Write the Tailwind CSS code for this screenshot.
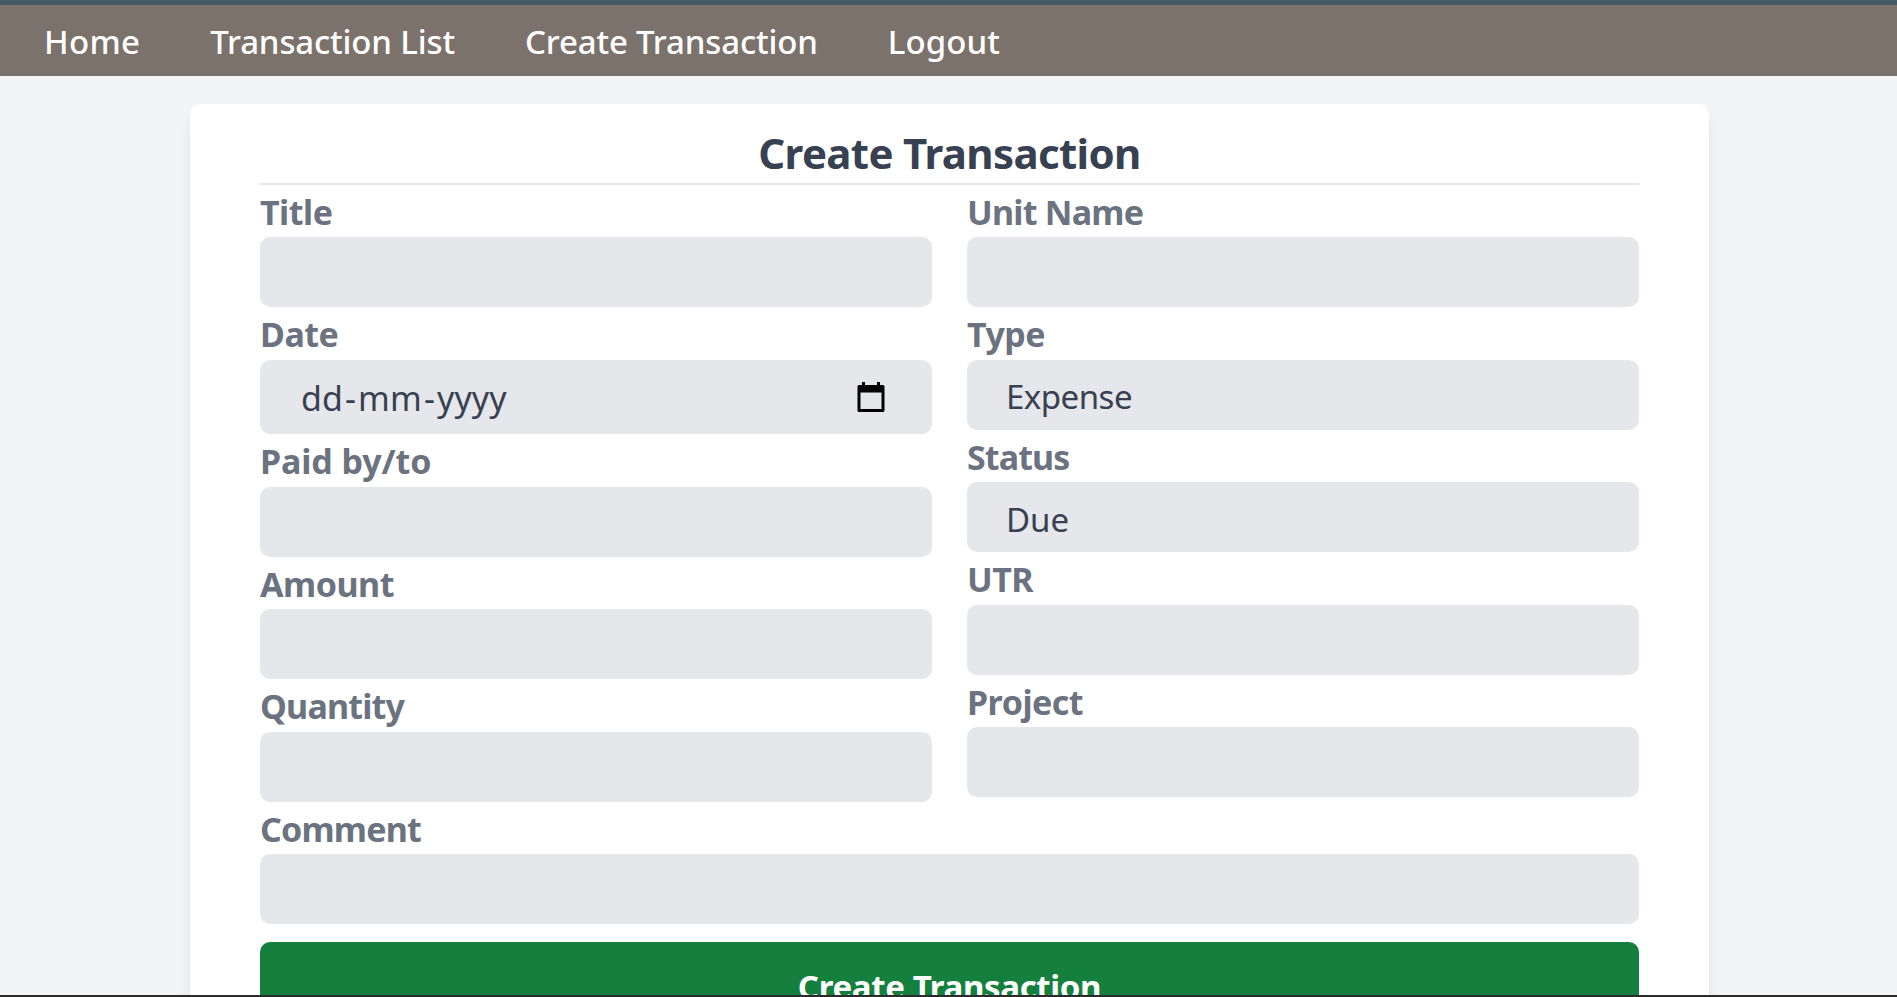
<!DOCTYPE html>
<html><head><meta charset="utf-8"><script src="https://cdn.jsdelivr.net/npm/@tailwindcss/browser@4"></script></head>
<body class="relative h-[997px] overflow-hidden bg-[#f3f4f6] font-['Noto_Sans',sans-serif]">
<div class="h-[5px] bg-[#455a64]"></div>
<nav class="flex h-[71px] items-center gap-[70px] bg-[#7c726c] pt-[2px] pl-[44px] text-[33px] font-medium tracking-[-0.15px] text-white">
<a class="tracking-[0.3px]">Home</a><a>Transaction List</a><a>Create Transaction</a><a class="tracking-[0.1px]">Logout</a>
</nav>
<main class="mt-[28px] ml-[190px] w-[1519px] rounded-[10px] bg-white px-[70px] pt-[24px] shadow-[0_12px_20px_-4px_rgba(0,0,0,0.1),0_5px_8px_-5px_rgba(0,0,0,0.1)]">
<h1 class="h-[57px] border-b-2 border-[#e5e7eb] text-center text-[42px] leading-[50px] font-bold tracking-[-0.65px] text-[#374151]">Create Transaction</h1>
<div class="grid grid-cols-2 gap-x-[35px]">
<div class="flex flex-col">
<label class="h-[52px] pt-[4px] text-[34px] leading-[46px] font-bold tracking-[-0.5px] text-[#6b7280]">Title</label><div class="h-[70px] rounded-[10px] bg-[#e5e7eb]"></div>
<label class="h-[53px] pt-[4px] text-[34px] leading-[46px] font-bold tracking-[-0.5px] text-[#6b7280]">Date</label>
<div class="flex h-[74px] items-center justify-between rounded-[10px] bg-[#e5e7eb] pr-[43px] pl-[41px] text-[34px] tracking-[0.1px] text-[#374151]"><span class="pt-[3px]">dd<span class="mx-[2px]">-</span>mm<span class="mx-[2px]">-</span>yyyy</span>
<svg class="h-[36px] w-[36px]" viewBox="0 0 24 24" fill="none"><path d="M3 5a1 1 0 0 1 1-1h2V2h2v2h8V2h2v2h2a1 1 0 0 1 1 1v16a1 1 0 0 1-1 1H4a1 1 0 0 1-1-1V5zm2 4v11h14V9H5z" fill="#000"/></svg></div>
<label class="h-[53px] pt-[4px] text-[34px] leading-[46px] font-bold tracking-[-0.1px] text-[#6b7280]">Paid by/to</label><div class="h-[70px] rounded-[10px] bg-[#e5e7eb]"></div>
<label class="h-[52px] pt-[4px] text-[34px] leading-[46px] font-bold tracking-[-0.5px] text-[#6b7280]">Amount</label><div class="h-[70px] rounded-[10px] bg-[#e5e7eb]"></div>
<label class="h-[53px] pt-[4px] text-[34px] leading-[46px] font-bold tracking-[-0.8px] text-[#6b7280]">Quantity</label><div class="h-[70px] rounded-[10px] bg-[#e5e7eb]"></div>
</div>
<div class="flex flex-col">
<label class="h-[52px] pt-[4px] text-[34px] leading-[46px] font-bold tracking-[-0.75px] text-[#6b7280]">Unit Name</label><div class="h-[70px] rounded-[10px] bg-[#e5e7eb]"></div>
<label class="h-[53px] pt-[4px] text-[34px] leading-[46px] font-bold tracking-[-0.5px] text-[#6b7280]">Type</label><div class="flex h-[70px] items-center rounded-[10px] bg-[#e5e7eb] pt-[3px] pl-[39px] text-[33px] tracking-[-0.5px] text-[#374151]">Expense</div>
<label class="h-[52px] pt-[4px] text-[34px] leading-[46px] font-bold tracking-[-0.9px] text-[#6b7280]">Status</label><div class="flex h-[70px] items-center rounded-[10px] bg-[#e5e7eb] pt-[5px] pl-[39px] text-[33px] text-[#374151]">Due</div>
<label class="h-[53px] pt-[4px] text-[34px] leading-[46px] font-bold tracking-[-0.5px] text-[#6b7280]">UTR</label><div class="h-[70px] rounded-[10px] bg-[#e5e7eb]"></div>
<label class="h-[52px] pt-[4px] text-[34px] leading-[46px] font-bold tracking-[-0.5px] text-[#6b7280]">Project</label><div class="h-[70px] rounded-[10px] bg-[#e5e7eb]"></div>
</div>
</div>
<label class="block h-[52px] pt-[4px] text-[34px] leading-[46px] font-bold tracking-[-0.8px] text-[#6b7280]">Comment</label><div class="h-[70px] rounded-[10px] bg-[#e5e7eb]"></div>
<button class="mt-[18px] block h-[90px] w-full rounded-[10px] bg-[#15803d] text-[33px] font-bold tracking-[-0.35px] text-white">Create Transaction</button>
</main>
<div class="absolute right-0 bottom-0 left-0 h-[2px] bg-[#2b2b2b]"></div>
</body></html>
